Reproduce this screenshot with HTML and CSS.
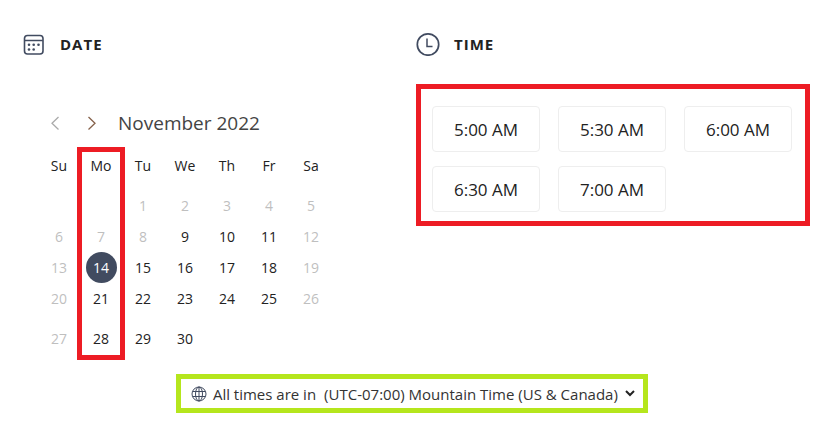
FILE: index.html
```html
<!DOCTYPE html>
<html lang="en">
<head>
<meta charset="utf-8">
<title>Select date and time</title>
<link rel="stylesheet" href="styles.css">
</head>
<body>
<main class="booking">
  <div class="columns">
    <section class="date">
      <h2 class="heading">
        <svg class="heading-icon" viewBox="0 0 24 24" width="24" height="24" aria-hidden="true">
          <rect x="2.500" y="3.500" width="18.500" height="18.500" rx="3" fill="none" stroke="#414b60" stroke-width="1.600"/>
          <path d="M2.800 8.500h18" stroke="#414b60" stroke-width="1.500"/>
          <g fill="#414b60"><circle cx="7" cy="12.700" r="1.300"/><circle cx="11.700" cy="12.700" r="1.300"/><circle cx="16.500" cy="12.700" r="1.300"/><circle cx="7" cy="17.500" r="1.300"/><circle cx="11.700" cy="17.500" r="1.300"/></g>
        </svg>
        DATE
      </h2>
      <div class="month">
        <button class="nav nav-prev" type="button" aria-label="Previous month"><svg viewBox="0 0 10 16" width="10" height="16"><path d="M8.5 2 2 8.3l6.500 6.200" /></svg></button>
        <button class="nav" type="button" aria-label="Next month"><svg viewBox="0 0 10 16" width="10" height="16"><path d="M1.500 2 8 8.300l-6.500 6.200" /></svg></button>
        <h3 class="month-name">November 2022</h3>
      </div>
      <div class="calendar">
        <table class="days">
          <thead>
            <tr><th>Su</th><th>Mo</th><th>Tu</th><th>We</th><th>Th</th><th>Fr</th><th>Sa</th></tr>
          </thead>
          <tbody>
            <tr><td></td><td></td><td class="off">1</td><td class="off">2</td><td class="off">3</td><td class="off">4</td><td class="off">5</td></tr>
            <tr><td class="off">6</td><td class="off">7</td><td class="off">8</td><td>9</td><td>10</td><td>11</td><td class="off">12</td></tr>
            <tr><td class="off">13</td><td><span class="selected">14</span></td><td>15</td><td>16</td><td>17</td><td>18</td><td class="off">19</td></tr>
            <tr><td class="off">20</td><td>21</td><td>22</td><td>23</td><td>24</td><td>25</td><td class="off">26</td></tr>
            <tr class="last"><td class="off">27</td><td>28</td><td>29</td><td>30</td><td></td><td></td><td></td></tr>
          </tbody>
        </table>
        <div class="day-marker"></div>
      </div>
    </section>
    <section class="time">
      <h2 class="heading">
        <svg class="heading-icon" viewBox="0 0 24 24" width="24" height="24" aria-hidden="true" fill="none" stroke="#414b60">
          <circle cx="12" cy="12.500" r="10.700" stroke-width="1.700"/>
          <path d="M11 6.500v8h5.500" stroke-width="1.500"/>
        </svg>
        TIME
      </h2>
      <div class="slots">
        <button class="slot" type="button">5:00 AM</button>
        <button class="slot" type="button">5:30 AM</button>
        <button class="slot" type="button">6:00 AM</button>
        <button class="slot" type="button">6:30 AM</button>
        <button class="slot" type="button">7:00 AM</button>
      </div>
    </section>
  </div>
  <div class="zone">
    <svg class="globe" viewBox="0 0 16 16" width="16" height="16" aria-hidden="true" fill="none" stroke="#414b60">
      <circle cx="8" cy="8" r="7"/><ellipse cx="8" cy="8" rx="3.500" ry="7"/><path d="M8 1v14M1.500 5.500h13M1.500 10.500h13"/>
    </svg>
    <label for="zone">All times are in</label>
    <select id="zone" class="zone-select"><option>(UTC-07:00) Mountain Time (US &amp; Canada)</option></select>
    <svg class="chevron" viewBox="0 0 10 8" width="10" height="8" aria-hidden="true"><path d="M1 1 5 5 9 1" fill="none" stroke="#222" stroke-width="2"/></svg>
  </div>
</main>
</body>
</html>
```
FILE: styles.css
```css
* { box-sizing: border-box; }

body {
  margin: 0;
  background: #fff;
  color: #222;
  font-family: "Open Sans", "Noto Sans", sans-serif;
  font-size: 14px;
}

button, select { font: inherit; color: inherit; }

.booking {
  display: flex;
  flex-direction: column;
  padding: 32px 29px 20px 22px;
}

.columns {
  display: grid;
  grid-template-columns: 1fr 1fr;
}

.heading {
  display: flex;
  align-items: center;
  gap: 14px;
  height: 24px;
  margin: 0;
  font-size: 15px;
  font-weight: 700;
  letter-spacing: 1px;
}

.month {
  display: flex;
  align-items: center;
  height: 30px;
  margin-top: 52px;
  padding-left: 28px;
}

.nav {
  display: flex;
  margin-right: 27px;
  padding: 0;
  border: 0;
  background: none;
}

.nav + .month-name { margin-left: -6px; }

.nav path {
  fill: none;
  stroke: #85614a;
  stroke-width: 1.3;
}

.nav-prev path { stroke: #aaa; }

.month-name {
  margin: 0;
  color: #444;
  font-size: 19px;
  font-weight: 400;
}

.calendar {
  position: relative;
  width: 294px;
  margin: 4px 0 0 16px;
}

.days {
  width: 100%;
  table-layout: fixed;
  border-collapse: collapse;
  line-height: 20px;
}

.days th, .days td {
  height: 31px;
  padding: 0;
  font-weight: 400;
  text-align: center;
}

.days th { height: 48px; }
.days .last td { height: 49px; }
.days .off { color: #bfbfbf; }

.selected {
  display: block;
  width: 31px;
  margin: 0 auto;
  border-radius: 50%;
  background: #414b60;
  color: #fff;
  line-height: 31px;
}

.day-marker {
  position: absolute;
  top: 5px;
  left: 39px;
  width: 48px;
  height: 213px;
  border: 5px solid #ed1c24;
  pointer-events: none;
}

.slots {
  display: grid;
  grid-template-columns: repeat(3, 1fr);
  gap: 14px 18px;
  margin-top: 28px;
  padding: 17px 13px 9px 11px;
  border: 5px solid #ed1c24;
}

.slot {
  height: 46px;
  padding: 0;
  border: 1px solid #eee;
  border-radius: 4px;
  background: #fff;
  font-size: 17px;
}

.zone {
  display: flex;
  align-items: center;
  align-self: center;
  height: 39px;
  margin: 11px 8px 0 0;
  padding: 0 8px 0 10px;
  border: 5px solid #b5e61d;
  color: #333;
  font-size: 15px;
}

.globe { margin-right: 6px; }

.zone-select {
  margin-left: 8px;
  padding: 0;
  border: 0;
  background: none;
  appearance: none;
}

.chevron { margin-left: 7px; }
```
